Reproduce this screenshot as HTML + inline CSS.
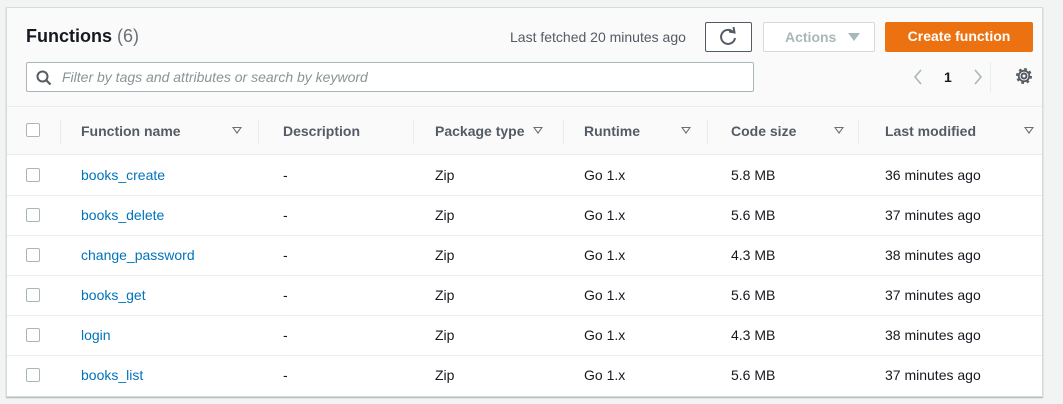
<!DOCTYPE html>
<html><head><style>
*{box-sizing:border-box;margin:0;padding:0}
body{width:1063px;height:404px;background:#f2f3f3;font-family:"Liberation Sans",Arial,sans-serif;font-size:14px;color:#16191f;position:relative;overflow:hidden}
.panel{position:absolute;left:6px;top:7px;width:1037px;height:390px;background:#fff;border:1px solid #d5dbdb;box-shadow:0 1px 1px rgba(0,28,36,.3)}
.head{position:absolute;left:0;top:0;width:100%;height:99px;background:#fafafa;border-bottom:1px solid #eaeded}
.abs{position:absolute}
.title{left:19px;top:18px;font-size:18px;font-weight:bold;color:#16191f}
.title span{font-weight:normal;color:#687078}
.btn{border:1px solid #545b64;border-radius:2px;background:#fff}
.search{left:19px;top:54px;width:728px;height:30px;border:1px solid #aab7b8;border-radius:2px;background:#fff}
.search i{position:absolute;left:35px;top:6px;font-style:italic;color:#879596;font-size:14px}
.thead{position:absolute;left:0;top:99px;width:100%;height:48px;background:#fafafa;border-bottom:1px solid #eaeded}
.th{position:absolute;top:16px;font-weight:bold;color:#545b64}
.div{position:absolute;top:13px;width:1px;height:24px;background:#eaeded}
.tri{position:absolute;top:20px;width:0;height:0;border-left:5px solid transparent;border-right:5px solid transparent;border-top:7px solid #687078}
.tri::after{content:"";position:absolute;left:-3px;top:-6px;border-left:3px solid transparent;border-right:3px solid transparent;border-top:4px solid #fafafa}
.cb{position:absolute;width:14px;height:14px;border:1px solid #aab7b8;border-radius:2px;background:#fff}
.row{position:absolute;left:0;width:100%;height:40px;border-bottom:1px solid #eaeded}
.row .c{position:absolute;top:11px}
.row a{color:#0073bb;text-decoration:none}
</style></head><body>
<div class="panel">
 <div class="head">
  <div class="abs title">Functions <span>(6)</span></div>
  <div class="abs" style="left:503px;top:21px;color:#545b64">Last fetched 20 minutes ago</div>
  <div class="abs btn" style="left:698px;top:14px;width:47px;height:30px">
   <svg width="45" height="28" viewBox="0 0 45 28"><path d="M27.5 9.5 A7 7 0 1 0 29 15" fill="none" stroke="#545b64" stroke-width="2"/><path d="M23 8.5 L28.5 9.5 L27.5 4" fill="none" stroke="#545b64" stroke-width="2"/></svg>
  </div>
  <div class="abs" style="left:756px;top:14px;width:112px;height:30px;border:1px solid #d5dbdb;border-radius:2px;background:#fff;color:#aab7b8;font-weight:bold;padding:6px 0 0 21px">Actions <span style="display:inline-block;margin-left:8px;border-left:6px solid transparent;border-right:6px solid transparent;border-top:8px solid #aab7b8;vertical-align:1px"></span></div>
  <div class="abs" style="left:878px;top:14px;width:148px;height:30px;background:#ec7211;border-radius:2px;color:#fff;font-weight:bold;text-align:center;padding-top:6px">Create function</div>
  <div class="abs search"><svg style="position:absolute;left:9px;top:7px" width="16" height="16" viewBox="0 0 16 16"><circle cx="6.5" cy="6.5" r="5" fill="none" stroke="#545b64" stroke-width="2"/><path d="M10 10 L14.5 14.5" stroke="#545b64" stroke-width="2.2"/></svg><i>Filter by tags and attributes or search by keyword</i></div>
  <svg class="abs" style="left:905px;top:60px" width="12" height="18" viewBox="0 0 12 18"><path d="M9 2 L3 9 L9 16" fill="none" stroke="#aab7b8" stroke-width="1.6"/></svg>
  <div class="abs" style="left:937px;top:61px;font-weight:bold">1</div>
  <svg class="abs" style="left:965px;top:60px" width="12" height="18" viewBox="0 0 12 18"><path d="M3 2 L9 9 L3 16" fill="none" stroke="#aab7b8" stroke-width="1.6"/></svg>
  <div class="abs" style="left:983px;top:54px;width:1px;height:30px;background:#eaeded"></div>
  <svg class="abs" style="left:1008px;top:59px" width="18" height="18" viewBox="0 0 18 18"><circle cx="9" cy="9" r="2.5" fill="none" stroke="#545b64" stroke-width="2"/><circle cx="9" cy="9" r="6.8" fill="none" stroke="#545b64" stroke-width="2.4" stroke-dasharray="2.6 2.74"/><circle cx="9" cy="9" r="5.3" fill="none" stroke="#545b64" stroke-width="1.8"/></svg>
 </div>
 <div class="thead">
  <div class="cb" style="left:19px;top:16px"></div>
  <div class="div" style="left:53px"></div>
  <div class="th" style="left:74px">Function name</div><div class="tri" style="left:225px"></div>
  <div class="div" style="left:251px"></div>
  <div class="th" style="left:276px">Description</div>
  <div class="div" style="left:406px"></div>
  <div class="th" style="left:428px">Package type</div><div class="tri" style="left:526px"></div>
  <div class="div" style="left:556px"></div>
  <div class="th" style="left:577px">Runtime</div><div class="tri" style="left:674px"></div>
  <div class="div" style="left:700px"></div>
  <div class="th" style="left:724px">Code size</div><div class="tri" style="left:827px"></div>
  <div class="div" style="left:851px"></div>
  <div class="th" style="left:878px">Last modified</div><div class="tri" style="left:1017px"></div>
 </div>
 <div class="row" style="top:148px"><div class="cb" style="left:19px;top:12px"></div><div class="c" style="left:74px"><a>books_create</a></div><div class="c" style="left:276px">-</div><div class="c" style="left:428px">Zip</div><div class="c" style="left:577px">Go 1.x</div><div class="c" style="left:724px">5.8 MB</div><div class="c" style="left:878px">36 minutes ago</div></div>
 <div class="row" style="top:188px"><div class="cb" style="left:19px;top:12px"></div><div class="c" style="left:74px"><a>books_delete</a></div><div class="c" style="left:276px">-</div><div class="c" style="left:428px">Zip</div><div class="c" style="left:577px">Go 1.x</div><div class="c" style="left:724px">5.6 MB</div><div class="c" style="left:878px">37 minutes ago</div></div>
 <div class="row" style="top:228px"><div class="cb" style="left:19px;top:12px"></div><div class="c" style="left:74px"><a>change_password</a></div><div class="c" style="left:276px">-</div><div class="c" style="left:428px">Zip</div><div class="c" style="left:577px">Go 1.x</div><div class="c" style="left:724px">4.3 MB</div><div class="c" style="left:878px">38 minutes ago</div></div>
 <div class="row" style="top:268px"><div class="cb" style="left:19px;top:12px"></div><div class="c" style="left:74px"><a>books_get</a></div><div class="c" style="left:276px">-</div><div class="c" style="left:428px">Zip</div><div class="c" style="left:577px">Go 1.x</div><div class="c" style="left:724px">5.6 MB</div><div class="c" style="left:878px">37 minutes ago</div></div>
 <div class="row" style="top:308px"><div class="cb" style="left:19px;top:12px"></div><div class="c" style="left:74px"><a>login</a></div><div class="c" style="left:276px">-</div><div class="c" style="left:428px">Zip</div><div class="c" style="left:577px">Go 1.x</div><div class="c" style="left:724px">4.3 MB</div><div class="c" style="left:878px">38 minutes ago</div></div>
 <div class="row" style="top:348px;border-bottom:none"><div class="cb" style="left:19px;top:12px"></div><div class="c" style="left:74px"><a>books_list</a></div><div class="c" style="left:276px">-</div><div class="c" style="left:428px">Zip</div><div class="c" style="left:577px">Go 1.x</div><div class="c" style="left:724px">5.6 MB</div><div class="c" style="left:878px">37 minutes ago</div></div>
</div>
</body></html>
